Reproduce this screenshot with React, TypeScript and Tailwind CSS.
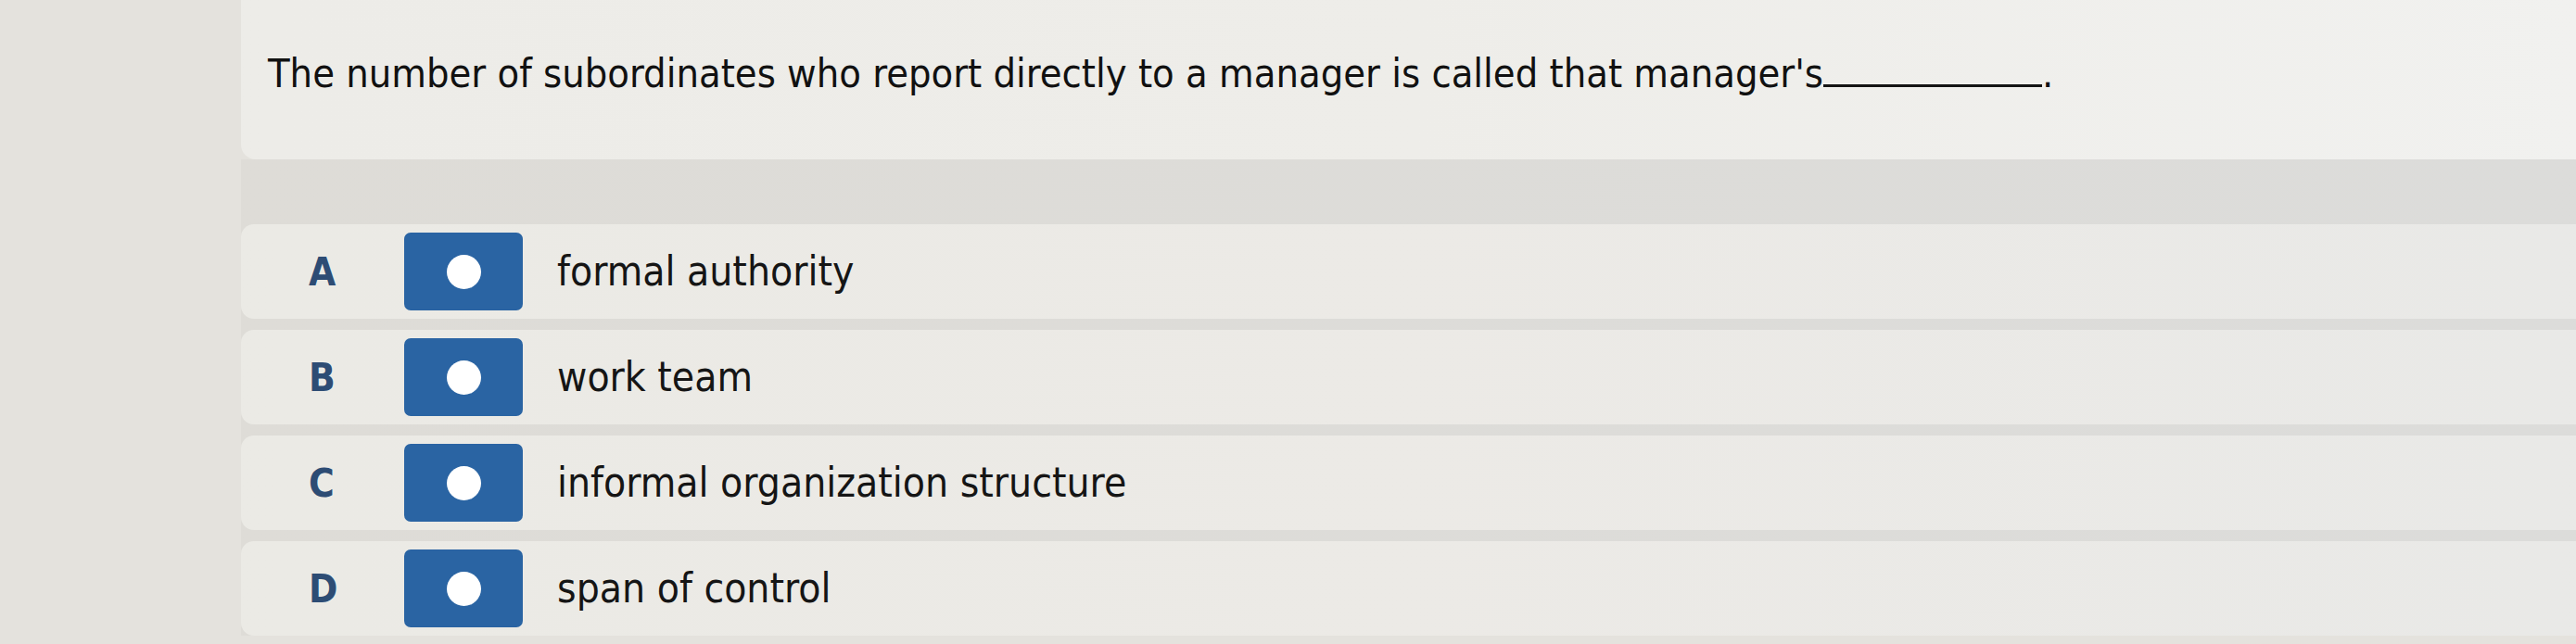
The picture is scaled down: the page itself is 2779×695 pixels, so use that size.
import React from 'react';

interface Choice {
  letter: string;
  text: string;
}

const choices: Choice[] = [
  { letter: 'A', text: 'formal authority' },
  { letter: 'B', text: 'work team' },
  { letter: 'C', text: 'informal organization structure' },
  { letter: 'D', text: 'span of control' },
];

const font = { fontFamily: '"DejaVu Sans Condensed", "DejaVu Sans", Verdana, sans-serif' };

const ChoiceRow: React.FC<{ choice: Choice }> = ({ choice }) => (
  <div className="flex items-center h-[102px] rounded-l-[14px] bg-gradient-to-r from-[#ebeae5] via-[#eceae6] to-[#e9e9e7]">
    <div className="w-[176px] pl-[73px] text-[42px] font-bold text-[#2d4c74]">{choice.letter}</div>
    <div className="flex items-center justify-center w-[128px] h-[84px] rounded-[7px] bg-[#2a64a3]">
      <div className="w-[37px] h-[37px] rounded-full bg-white" />
    </div>
    <div className="pl-[37px] text-[44px] text-[#151515]">{choice.text}</div>
  </div>
);

export default function App() {
  return (
    <div className="w-[2779px] h-[695px] overflow-hidden bg-[#e4e2dd] pl-[260px]" style={font}>
      <div className="h-[172px] rounded-bl-[16px] bg-gradient-to-r from-[#edece8] via-[#eeede9] to-[#f1f1ef] pl-[29px] pt-[50px]">
        <p className="text-[43px] text-[#111111] leading-[58px]">
          The number of subordinates who report directly to a manager is called that manager's
          <span className="inline-block w-[236px] border-b-[3px] border-[#141414] align-baseline" />.
        </p>
      </div>
      <div className="flex flex-col gap-[12px] pt-[70px] bg-gradient-to-r from-[#dedcd7] to-[#dcdcda]">
        {choices.map(c => (
          <ChoiceRow key={c.letter} choice={c} />
        ))}
      </div>
    </div>
  );
}
